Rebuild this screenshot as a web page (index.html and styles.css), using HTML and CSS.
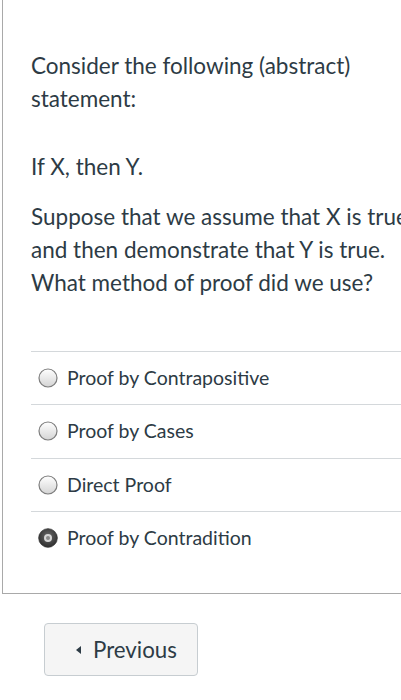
FILE: index.html
```html
<!DOCTYPE html>
<html>
<head>
<meta charset="utf-8">
<link rel="stylesheet" href="styles.css">
</head>
<body>
<div class="card">
  <div class="question">
    <p class="p1">Consider the following (abstract) statement:</p>
    <p class="p2">If X, then Y.</p>
    <p class="p3">Suppose that we assume that X is true and then demonstrate that Y is true. What method of proof did we use?</p>
  </div>
  <div class="answers">
    <div class="answer">
      <svg class="radio" width="20" height="20" viewBox="0 0 20 20"><defs><linearGradient id="g1" x1="0" y1="0" x2="0" y2="1"><stop offset="0" stop-color="#ffffff"/><stop offset="1" stop-color="#d4d4d4"/></linearGradient></defs><circle cx="10" cy="10" r="9" fill="url(#g1)" stroke="#7d7d7d" stroke-width="1.2"/></svg>
      <span class="label">Proof by Contrapositive</span>
    </div>
    <div class="answer">
      <svg class="radio" width="20" height="20" viewBox="0 0 20 20"><circle cx="10" cy="10" r="9" fill="url(#g1)" stroke="#7d7d7d" stroke-width="1.2"/></svg>
      <span class="label">Proof by Cases</span>
    </div>
    <div class="answer">
      <svg class="radio" width="20" height="20" viewBox="0 0 20 20"><circle cx="10" cy="10" r="9" fill="url(#g1)" stroke="#7d7d7d" stroke-width="1.2"/></svg>
      <span class="label">Direct Proof</span>
    </div>
    <div class="answer">
      <svg class="radio" width="20" height="20" viewBox="0 0 20 20"><defs><radialGradient id="g2" cx="0.5" cy="0.4" r="0.6"><stop offset="0" stop-color="#6a6a6a"/><stop offset="1" stop-color="#2e2e2e"/></radialGradient></defs><circle cx="10" cy="10" r="9.3" fill="url(#g2)" stroke="#333" stroke-width="0.8"/><circle cx="10" cy="10" r="4" fill="#d6d6d6"/><circle cx="10" cy="10" r="2" fill="#8a8a8a"/></svg>
      <span class="label">Proof by Contradition</span>
    </div>
  </div>
</div>
<div class="nav">
  <button class="btn"><span class="tri"></span><span>Previous</span></button>
</div>
</body>
</html>
```
FILE: styles.css
```css
html, body {
  margin: 0;
  padding: 0;
  background: #ffffff;
  overflow: hidden;
}
body {
  font-family: Lato, "Open Sans", sans-serif;
  color: #2d3b45;
  width: 401px;
  height: 700px;
}
.card {
  margin-left: 2px;
  width: 460px;
  border-left: 1px solid #a9a9a9;
  border-bottom: 1px solid #a9a9a9;
  padding: 49px 0 0 28px;
  box-sizing: border-box;
  height: 594px;
}
.question p {
  margin: 0;
  font-size: 22.5px;
  line-height: 33px;
}
.question .p1 { margin-bottom: 35px; width: 345px; }
.question .p2 { margin-bottom: 17px; }
.question .p3 { width: 385px; }
.answers {
  margin-top: 52px;
}
.answer {
  display: flex;
  align-items: center;
  height: 53.3px;
  box-sizing: border-box;
  border-top: 1px solid #d4d8db;
  padding-left: 7px;
}
.radio {
  flex: none;
  display: block;
  margin-right: 9px;
}
.label {
  font-size: 19.5px;
  line-height: 24px;
}
.nav {
  padding: 29px 0 0 44px;
}
.btn {
  font-family: Lato, "Open Sans", sans-serif;
  font-size: 22.3px;
  color: #2d3b45;
  background: #f5f5f5;
  border: 1px solid #c7cdd1;
  border-radius: 4px;
  width: 154px;
  height: 53px;
  display: flex;
  align-items: center;
  padding: 0 0 0 31px;
  box-sizing: border-box;
  gap: 12px;
}
.tri {
  width: 0;
  height: 0;
  border-top: 4px solid transparent;
  border-bottom: 4px solid transparent;
  border-right: 5px solid #2d3b45;
}
```
